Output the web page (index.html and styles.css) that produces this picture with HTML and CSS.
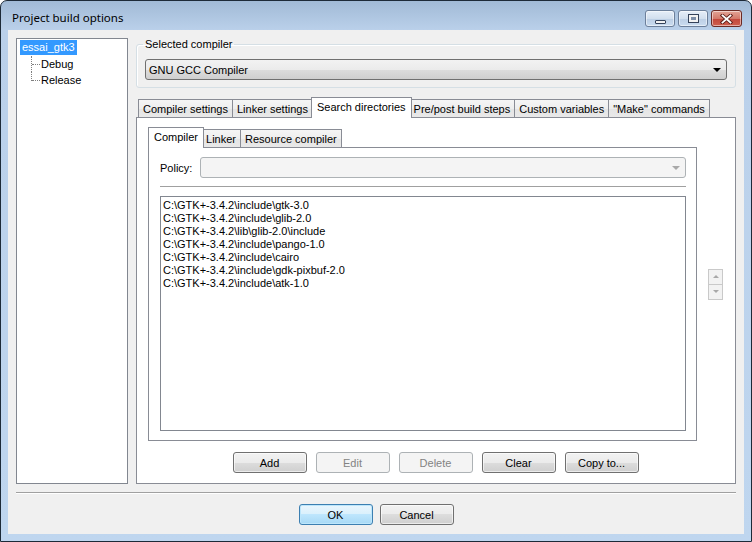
FILE: index.html
```html
<!DOCTYPE html>
<html lang="en">
<head>
<meta charset="UTF-8" />
<title>Project build options</title>
<link rel="stylesheet" href="styles.css">
</head>
<body>

<!-- Dialog window -->
<div class="window">

  <!-- Title bar -->
  <div class="titlebar">
    <span class="title">Project build options</span>
    <div class="capBtns">
      <span class="capBtn"><span class="icoMin"></span></span>
      <span class="capBtn"><span class="icoMax"></span></span>
      <span class="capBtn capClose">
        <svg width="13" height="10" viewBox="0 0 13 10">
          <path d="M2.5 1.5 L10.5 8.5 M10.5 1.5 L2.5 8.5" stroke="#5a1d18" stroke-width="3.6" stroke-linecap="square" fill="none"/>
          <path d="M2.5 1.5 L10.5 8.5 M10.5 1.5 L2.5 8.5" stroke="#ffffff" stroke-width="1.8" stroke-linecap="square" fill="none"/>
        </svg>
      </span>
    </div>
  </div>

  <!-- Client area -->
  <div class="client">
    <div class="mainRow">

      <!-- Targets tree -->
      <div class="tree">
        <span class="treeRoot">essai_gtk3</span>
        <ul class="treeKids">
          <li>Debug</li>
          <li>Release</li>
        </ul>
      </div>

      <div class="rightCol">
        <fieldset class="group">
          <legend>Selected compiler</legend>
          <div class="combo">
            <span>GNU GCC Compiler</span>
            <span class="comboArrow"></span>
          </div>
        </fieldset>

        <!-- Main tabs -->
        <div class="tabStrip">
          <span class="tab">Compiler settings</span>
          <span class="tab">Linker settings</span>
          <span class="tab active">Search directories</span>
          <span class="tab">Pre/post build steps</span>
          <span class="tab">Custom variables</span>
          <span class="tab">"Make" commands</span>
        </div>

        <div class="tabPanel">
          <div class="innerArea">
            <div class="innerLeft">
              <div class="tabStrip sub">
                <span class="tab active">Compiler</span>
                <span class="tab">Linker</span>
                <span class="tab">Resource compiler</span>
              </div>
              <div class="subPanel">
                <div class="policyRow">
                  <span class="policyLabel">Policy:</span>
                  <div class="combo disabled">
                    <span></span>
                    <span class="comboArrow"></span>
                  </div>
                </div>
                <div class="hSep"></div>
                <div class="dirList">
                  <div>C:\GTK+-3.4.2\include\gtk-3.0</div>
                  <div>C:\GTK+-3.4.2\include\glib-2.0</div>
                  <div>C:\GTK+-3.4.2\lib\glib-2.0\include</div>
                  <div>C:\GTK+-3.4.2\include\pango-1.0</div>
                  <div>C:\GTK+-3.4.2\include\cairo</div>
                  <div>C:\GTK+-3.4.2\include\gdk-pixbuf-2.0</div>
                  <div>C:\GTK+-3.4.2\include\atk-1.0</div>
                </div>
              </div>
            </div>
            <div class="spin">
              <span class="spinBtn"><span class="arrUp"></span></span>
              <span class="spinBtn"><span class="arrDown"></span></span>
            </div>
          </div>

          <div class="btnRow">
            <button class="btn">Add</button>
            <button class="btn" disabled>Edit</button>
            <button class="btn" disabled>Delete</button>
            <button class="btn">Clear</button>
            <button class="btn">Copy to...</button>
          </div>
        </div>
      </div>
    </div>

    <div class="dlgSep"></div>
    <div class="dlgBtns">
      <button class="btn default">OK</button>
      <button class="btn">Cancel</button>
    </div>
  </div>
</div>

</body>
</html>
```

FILE: styles.css
```css
* {
  box-sizing: border-box;
}

body {
  margin: 0;
  background: #ffffff;
}

/* Window frame */
.window {
  width: 752px;
  height: 542px;
  display: flex;
  flex-direction: column;
  border: 1px solid #1d2a38;
  border-radius: 7px 7px 0 0;
  background: linear-gradient(to bottom, #a1bad6 0, #bad0ea 29px, #bfd6ef 100%);
  font: 11px "Liberation Sans", Arial, sans-serif;
  color: #000;
}

/* Title bar */
.titlebar {
  height: 29px;
  display: flex;
  justify-content: space-between;
  align-items: flex-start;
  padding: 0 9px 0 11px;
}

.title {
  margin-top: 9px;
  font: 11.5px/16px "Noto Sans", sans-serif;
  color: #000;
}

.capBtns {
  display: flex;
  gap: 3px;
  margin-top: 9px;
}

.capBtn {
  width: 30px;
  height: 17px;
  display: flex;
  align-items: center;
  justify-content: center;
  border: 1px solid #6c7f9a;
  border-radius: 3px;
  background: linear-gradient(to bottom, #e6eef8 0, #d2dfee 50%, #bccee4 51%, #cadcf0 100%);
  box-shadow: inset 0 0 0 1px rgba(255,255,255,0.5);
}

.capClose {
  width: 31px;
  border-color: #6b2a24;
  background: linear-gradient(to bottom, #e3a496 0, #d47a6b 50%, #c2463a 51%, #cf5f4f 100%);
}

.icoMin {
  width: 11px;
  height: 4px;
  margin-top: 6px;
  border: 1px solid #34425a;
  border-radius: 1px;
  background: #f2f2f2;
}

.icoMax {
  width: 11px;
  height: 9px;
  border: 1px solid #34425a;
  background: #7d8ea8;
  box-shadow: inset 0 0 0 2px #f2f2f2;
}

/* Client area */
.client {
  flex: 1;
  margin: 0 7px 7px;
  display: flex;
  flex-direction: column;
  background: #f0f0f0;
}

.mainRow {
  height: 454px;
  display: flex;
  gap: 8px;
  padding: 8px 8px 0;
}

/* Tree */
.tree {
  width: 112px;
  flex-shrink: 0;
  padding: 1px 3px;
  border: 1px solid #828790;
  background: #fff;
}

.treeRoot {
  display: inline-block;
  padding: 0 2px;
  line-height: 15px;
  background: #3399ff;
  color: #fff;
}

.treeKids {
  list-style: none;
  margin: 1px 0 0 11px;
  padding: 0;
}

.treeKids li {
  position: relative;
  height: 16px;
  line-height: 16px;
  padding-left: 10px;
}

.treeKids li::before {
  content: "";
  position: absolute;
  left: 0;
  top: 0;
  height: 16px;
  border-left: 1px dotted #808080;
}

.treeKids li:last-child::before {
  height: 9px;
}

.treeKids li::after {
  content: "";
  position: absolute;
  left: 1px;
  top: 8px;
  width: 8px;
  border-top: 1px dotted #808080;
}

/* Right column */
.rightCol {
  flex: 1;
  display: flex;
  flex-direction: column;
}

.group {
  margin: 0;
  padding: 8px 8px 7px;
  border: 1px solid #d5dfe5;
  border-radius: 3px;
  box-shadow: inset 1px 1px 0 #fff;
}

.group legend {
  padding: 0 2px;
  margin-left: -2px;
  line-height: 13px;
}

.combo {
  height: 21px;
  display: flex;
  align-items: center;
  justify-content: space-between;
  padding: 0 5px 0 3px;
  border: 1px solid #707070;
  border-radius: 3px;
  background: linear-gradient(to bottom, #f2f2f2 0, #ebebeb 50%, #dddddd 50%, #cfcfcf 100%);
}

.comboArrow {
  width: 0;
  height: 0;
  border-left: 4px solid transparent;
  border-right: 4px solid transparent;
  border-top: 4px solid #000;
}

.combo.disabled {
  flex: 1;
  border-color: #adb2b5;
  background: #f4f4f4;
}

.combo.disabled .comboArrow {
  border-top-color: #a8a8a8;
}

/* Tabs */
.tabStrip {
  display: flex;
  align-items: flex-end;
  padding-left: 2px;
  margin: 9px 0 -1px;
  position: relative;
  z-index: 1;
}

.tab {
  height: 18px;
  margin-bottom: 1px;
  padding: 1px 4px 0;
  line-height: 16px;
  white-space: nowrap;
  border: 1px solid #898c95;
  border-bottom: 0;
  border-left-width: 0;
  background: linear-gradient(to bottom, #f5f5f5 0, #eeeeee 50%, #e4e4e4 51%, #e9e9e9 100%);
}

.tab:first-child {
  border-left-width: 1px;
}

.tab.active {
  height: 21px;
  margin: 0 -2px 0 -2px;
  padding: 1px 5px 0;
  border-left-width: 1px;
  background: #fff;
  position: relative;
  z-index: 2;
}

.tab.active + .tab {
  border-left-width: 0;
}

.tabPanel {
  flex: 1;
  display: flex;
  flex-direction: column;
  padding: 9px 12px 10px 11px;
  border: 1px solid #898c95;
  background: #fff;
}

.innerArea {
  flex: 1;
  display: flex;
  align-items: center;
}

.innerLeft {
  width: 549px;
  align-self: stretch;
  display: flex;
  flex-direction: column;
}

.tabStrip.sub {
  margin-top: 0;
}

.subPanel {
  flex: 1;
  display: flex;
  flex-direction: column;
  padding: 9px 10px 9px 11px;
  border: 1px solid #898c95;
  background: #fff;
}

.policyRow {
  height: 21px;
  display: flex;
  align-items: center;
}

.policyLabel {
  width: 40px;
}

.hSep {
  margin-top: 8px;
  border-top: 1px solid #a0a0a0;
}

.dirList {
  flex: 1;
  margin-top: 9px;
  padding: 2px 2px;
  line-height: 13px;
  border: 1px solid #828790;
  white-space: nowrap;
}

/* Up / down arrows */
.spin {
  margin-left: 11px;
  display: flex;
  flex-direction: column;
}

.spinBtn {
  width: 15px;
  height: 16px;
  display: flex;
  align-items: center;
  justify-content: center;
  border: 1px solid #c9c9c9;
  background: #f2f2f2;
}

.spinBtn + .spinBtn {
  margin-top: -1px;
}

.arrUp,
.arrDown {
  width: 0;
  height: 0;
  border-left: 3px solid transparent;
  border-right: 3px solid transparent;
}

.arrUp {
  border-bottom: 3px solid #a8a8a8;
}

.arrDown {
  border-top: 3px solid #a8a8a8;
}

/* Buttons */
.btnRow {
  margin-top: 11px;
  display: flex;
  justify-content: center;
  gap: 9px;
}

.btn {
  width: 74px;
  height: 21px;
  padding: 0;
  font: inherit;
  color: #000;
  border: 1px solid #707070;
  border-radius: 3px;
  background: linear-gradient(to bottom, #f2f2f2 0, #ebebeb 50%, #dddddd 50%, #cfcfcf 100%);
  box-shadow: inset 0 0 0 1px rgba(255,255,255,0.6);
}

.btn:disabled {
  color: #838383;
  border-color: #adb2b5;
  background: #f4f4f4;
  box-shadow: none;
}

.btn.default {
  border-color: #3c7fb1;
  background: linear-gradient(to bottom, #eaf6fd 0, #d9f0fc 50%, #bee6fd 50%, #a7d9f5 100%);
  box-shadow: inset 0 0 0 1px #bde6fb;
}

.dlgSep {
  margin: 8px 8px 0;
  border-top: 1px solid #a0a0a0;
  border-bottom: 1px solid #fff;
}

.dlgBtns {
  margin-top: 10px;
  display: flex;
  justify-content: center;
  gap: 7px;
}
```
